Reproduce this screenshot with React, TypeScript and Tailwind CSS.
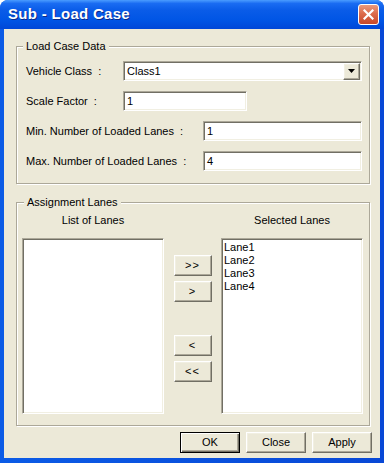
const raised =
  "border border-t-white border-l-white border-b-[#716f64] border-r-[#716f64] shadow-[inset_-1px_-1px_0_#aca899,inset_1px_1px_0_#f1efe2] bg-[#ece9d8]";
const sunken =
  "border border-t-[#aca899] border-l-[#aca899] border-b-white border-r-white shadow-[inset_1px_1px_0_#716f64,inset_-1px_-1px_0_#f1efe2] bg-white";
const group =
  "border border-[#aca899] shadow-[1px_1px_0_white,inset_1px_1px_0_white] flex flex-col";

function GroupTitle({ text, className = "" }: { text: string; className?: string }) {
  return (
    <span className={`-mt-[7px] px-[3px] self-start bg-[#ece9d8] leading-[13px] ${className}`}>
      {text}
    </span>
  );
}

function Field({ label, value, labelWidth, inputWidth }: { label: string; value: string; labelWidth: string; inputWidth?: string }) {
  return (
    <div className="flex items-center h-[20px]">
      <span className={`${labelWidth} whitespace-pre shrink-0`}>{label}</span>
      <div className={`${sunken} ${inputWidth ?? "flex-1"} h-[20px] flex items-center pl-[3px]`}>{value}</div>
    </div>
  );
}

function SmallButton({ label, className = "" }: { label: string; className?: string }) {
  return (
    <button type="button" className={`${raised} ${className} w-[38px] h-[21px] flex items-center justify-center tracking-[1px]`}>
      {label}
    </button>
  );
}

export default function App() {
  const lanes = ["Lane1", "Lane2", "Lane3", "Lane4"];

  return (
    <div className="w-[384px] h-[463px] flex flex-col rounded-t-[8px] overflow-hidden bg-[linear-gradient(90deg,#0b5be6,#0848d6)] font-['Liberation_Sans',Arial,sans-serif] text-[11px] text-black">
      {/* title bar */}
      <div className="h-[29px] shrink-0 flex items-center justify-between pl-[8px] pr-[5px] bg-[linear-gradient(180deg,#4a9cff_0%,#1a6cf2_12%,#0a5ce8_35%,#0055e5_70%,#0047d8_100%)]">
        <span className="text-white font-bold text-[15px] tracking-[0.3px] [text-shadow:1px_1px_0_#0b2a8a]">
          Sub - Load Case
        </span>
        <button
          type="button"
          className="w-[21px] h-[21px] rounded-[3px] border border-white bg-[linear-gradient(180deg,#eb9a7e_0%,#dc6c4c_45%,#c8482a_100%)] flex items-center justify-center"
        >
          <svg width="11" height="11" viewBox="0 0 11 11">
            <path d="M1.5 1.5 L9.5 9.5 M9.5 1.5 L1.5 9.5" stroke="white" strokeWidth="2.2" strokeLinecap="square" />
          </svg>
        </button>
      </div>

      {/* client */}
      <div className="mx-[4px] mb-[5px] flex-1 bg-[#ece9d8] flex flex-col pt-[17px] pl-[12px] pr-[10px] pb-[5px]">
        <div className={`${group} h-[138px] pl-[9px] pr-[7px]`}>
          <GroupTitle text="Load Case Data" className="-ml-[3px]" />
          <div className="mt-[8px] flex flex-col gap-[10px]">
            <div className="flex items-center h-[20px]">
              <span className="w-[97px] whitespace-pre shrink-0">Vehicle Class  :</span>
              <div className={`${sunken} flex-1 h-[20px] flex items-center justify-between pl-[3px] pr-[1px]`}>
                <span>Class1</span>
                <div className={`${raised} w-[17px] h-[17px] flex items-center justify-center`}>
                  <svg width="7" height="4" viewBox="0 0 7 4">
                    <path d="M0 0 H7 L3.5 4 Z" fill="black" />
                  </svg>
                </div>
              </div>
            </div>
            <Field label="Scale Factor  :" value="1" labelWidth="w-[97px]" inputWidth="w-[124px]" />
            <Field label="Min. Number of Loaded Lanes  :" value="1" labelWidth="w-[177px]" />
            <Field label="Max. Number of Loaded Lanes  :" value="4" labelWidth="w-[177px]" />
          </div>
        </div>

        <div className={`${group} mt-[18px] h-[224px] pl-[5px] pr-[6px]`}>
          <GroupTitle text="Assignment Lanes" className="ml-[2px]" />
          <div className="mt-[5px] flex justify-between leading-[13px]">
            <span className="w-[142px] text-center">List of Lanes</span>
            <span className="w-[142px] text-center">Selected Lanes</span>
          </div>
          <div className="mt-[11px] flex justify-between">
            <div className={`${sunken} w-[142px] h-[176px]`} />
            <div className="w-[38px] flex flex-col pt-[17px]">
              <SmallButton label=">>" />
              <SmallButton label=">" className="mt-[5px]" />
              <SmallButton label="<" className="mt-[33px]" />
              <SmallButton label="<<" className="mt-[5px]" />
            </div>
            <div className={`${sunken} w-[142px] h-[176px] pl-[2px] pt-[2px] flex flex-col leading-[13px]`}>
              {lanes.map((lane) => (
                <span key={lane}>{lane}</span>
              ))}
            </div>
          </div>
        </div>

        <div className="mt-[6px] -mr-[2px] flex justify-end gap-[6px]">
          <button
            type="button"
            className="w-[60px] h-[21px] border border-black bg-[#ece9d8] shadow-[inset_1px_1px_0_white,inset_-1px_-1px_0_#716f64,inset_-2px_-2px_0_#aca899]"
          >
            OK
          </button>
          <button type="button" className={`${raised} w-[60px] h-[21px]`}>
            Close
          </button>
          <button type="button" className={`${raised} w-[60px] h-[21px]`}>
            Apply
          </button>
        </div>
      </div>
    </div>
  );
}
